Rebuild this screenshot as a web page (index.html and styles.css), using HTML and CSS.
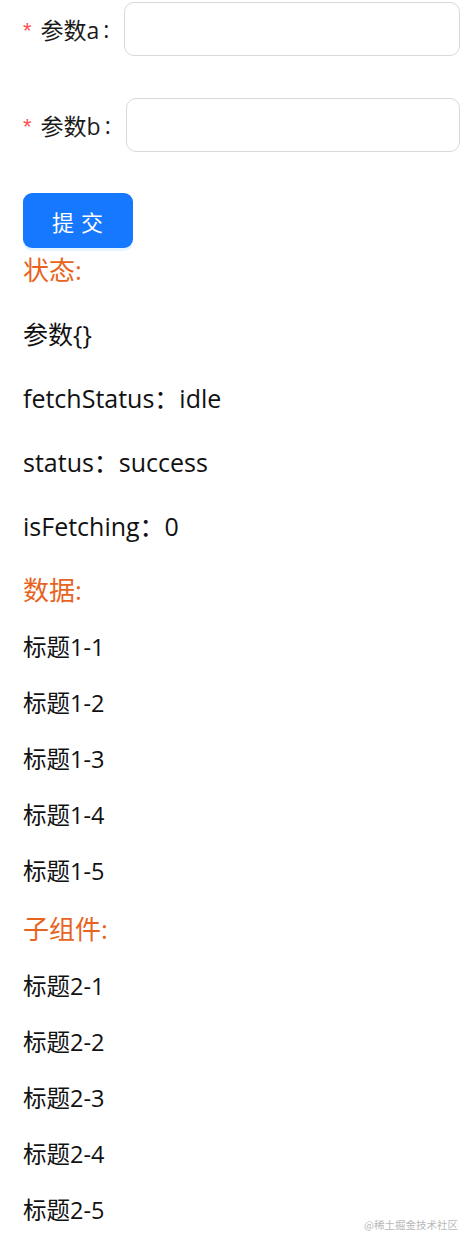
FILE: index.html
```html
<!DOCTYPE html>
<html lang="zh">
<head>
<meta charset="utf-8">
<link rel="stylesheet" href="styles.css">
</head>
<body>
<div class="page">
  <form class="form">
    <div class="form-item">
      <label class="label"><span class="req">*</span>参数a<span class="colon">:</span></label>
      <input class="input" type="text">
    </div>
    <div class="form-item">
      <label class="label"><span class="req">*</span>参数b<span class="colon">:</span></label>
      <input class="input" type="text">
    </div>
    <button class="btn" type="button">提 交</button>
  </form>
  <div class="heading">状态:</div>
  <p class="state">参数{}</p>
  <p class="state">fetchStatus：idle</p>
  <p class="state">status：success</p>
  <p class="state">isFetching：0</p>
  <div class="heading">数据:</div>
  <p class="item">标题1-1</p>
  <p class="item">标题1-2</p>
  <p class="item">标题1-3</p>
  <p class="item">标题1-4</p>
  <p class="item">标题1-5</p>
  <div class="heading">子组件:</div>
  <p class="item">标题2-1</p>
  <p class="item">标题2-2</p>
  <p class="item">标题2-3</p>
  <p class="item">标题2-4</p>
  <p class="item">标题2-5</p>
</div>
<div class="watermark">@稀土掘金技术社区</div>
</body>
</html>
```
FILE: styles.css
```css
html, body {
  margin: 0;
  padding: 0;
  background: #fff;
}
body {
  font-family: "Open Sans", "Noto Sans CJK SC", sans-serif;
  color: #111;
  position: relative;
  min-height: 1244px;
}
.page {
  padding: 2px 14px 0 23px;
}
.form {
  display: flex;
  flex-direction: column;
  align-items: flex-start;
}
.form-item {
  display: flex;
  align-items: center;
  width: 100%;
  height: 54px;
  margin-bottom: 42px;
}
.label {
  font-size: 23px;
  color: #1a1a1a;
  white-space: nowrap;
  display: flex;
  align-items: center;
}
.req {
  color: #ff4d4f;
  font-size: 22px;
  margin-right: 9px;
  font-family: "Liberation Sans", sans-serif;
  position: relative;
  top: 2px;
}
.colon {
  margin: 0 15px 0 4px;
}
.input {
  flex: 1;
  height: 54px;
  box-sizing: border-box;
  border: 1.5px solid #d9d9d9;
  border-radius: 10px;
  background: #fff;
  font-size: 22px;
  padding: 0 16px;
  outline: none;
}
.btn {
  margin-top: -1px;
  width: 110px;
  height: 55px;
  border: none;
  border-radius: 9px;
  background: #1677ff;
  color: #fff;
  font-family: "Noto Sans CJK SC", sans-serif;
  font-size: 22px;
  letter-spacing: 1px;
  box-shadow: 0 3px 0 rgba(5, 145, 255, 0.1);
  cursor: pointer;
}
.heading {
  font-size: 26px;
  color: #e8641e;
  line-height: 44px;
}
.state {
  margin: 0;
  font-size: 25px;
  line-height: 64px;
}
.item {
  margin: 0;
  font-size: 23.5px;
  line-height: 56px;
}
.heading + .item {
  margin-top: 7px;
}
.heading + .state {
  margin-top: 10px;
}
.state + .heading {
  margin-top: 10px;
}
.item + .heading {
  margin-top: 8px;
}
.watermark {
  position: absolute;
  right: 16px;
  bottom: 12px;
  font-size: 10.5px;
  color: #b8b8b8;
  font-family: "Noto Sans CJK SC", sans-serif;
}
```
